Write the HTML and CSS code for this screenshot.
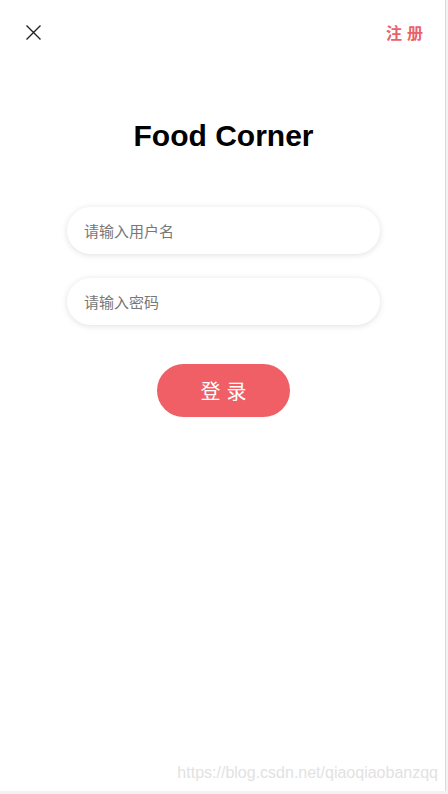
FILE: index.html
```html
<!DOCTYPE html>
<html lang="zh">
<head>
<meta charset="utf-8">
<title>Food Corner</title>
<link rel="stylesheet" href="styles.css">
</head>
<body>
<div class="screen">
  <header class="topbar">
    <span class="close" aria-label="关闭">
      <svg width="15" height="15" viewBox="0 0 15 15"><path d="M0.5 0.5 L14.5 14.5 M14.5 0.5 L0.5 14.5" stroke="#222" stroke-width="1.4" fill="none"/></svg>
    </span>
    <span class="register">注册</span>
  </header>
  <h1 class="title">Food Corner</h1>
  <form class="form">
    <div class="field"><input class="input" type="text" placeholder="请输入用户名"></div>
    <div class="field"><input class="input" type="password" placeholder="请输入密码"></div>
    <button class="login" type="button">登录</button>
  </form>
  <div class="watermark">https://blog.csdn.net/qiaoqiaobanzqq</div>
</div>
</body>
</html>
```
FILE: styles.css
```css
html {
  background: #f2f2f2;
}
body {
  margin: 0;
  font-family: "Liberation Sans", Arial, "Noto Sans CJK SC", sans-serif;
}
.screen {
  position: relative;
  width: 447px;
  height: 791px;
  background: linear-gradient(to right, #ffffff 445px, #d8d8d8 445px, #d8d8d8 446px, #f4f4f4 446px);
  overflow: hidden;
}
.topbar {
  display: flex;
  justify-content: space-between;
  align-items: center;
  padding: 24px 19px 0 26px;
  height: 16px;
}
.close {
  display: flex;
  width: 15px;
  height: 15px;
}
.register {
  font-family: "Noto Sans CJK SC", sans-serif;
  font-size: 16px;
  line-height: 16px;
  font-weight: 700;
  letter-spacing: 5px;
  color: #e9616a;
}
.title {
  margin: 79px 0 0;
  text-align: center;
  font-family: "Liberation Sans", Arial, sans-serif;
  font-size: 30px;
  line-height: 34px;
  font-weight: 700;
  color: #000;
}
.form {
  display: flex;
  flex-direction: column;
  align-items: center;
  margin-top: 54px;
}
.field {
  width: 313px;
  height: 47px;
  border-radius: 24px;
  background: #fff;
  box-shadow: 0 1px 6px rgba(0, 0, 0, 0.13);
  margin-bottom: 24px;
  display: flex;
}
.input {
  flex: 1;
  border: none;
  outline: none;
  background: transparent;
  padding: 0 0 0 17px;
  font-family: "Noto Sans CJK SC", sans-serif;
  font-size: 15px;
  color: #333;
}
.input::placeholder {
  color: #777;
}
.login {
  margin-top: 15px;
  width: 133px;
  height: 53px;
  border: none;
  border-radius: 27px;
  background: #ef5f65;
  color: #fff;
  font-family: "Noto Sans CJK SC", sans-serif;
  font-size: 20px;
  letter-spacing: 6px;
  padding: 0 0 0 6px;
}
.watermark {
  position: absolute;
  right: 9px;
  bottom: 9px;
  font-family: "Liberation Sans", Arial, sans-serif;
  font-size: 16px;
  color: #e2e2e2;
}
```
